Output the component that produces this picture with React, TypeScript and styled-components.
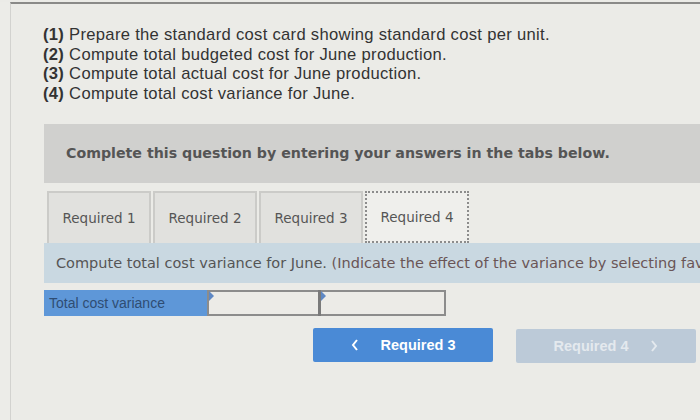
import React from "react";
import styled, { createGlobalStyle } from "styled-components";

const Global = createGlobalStyle`
  html, body { margin: 0; padding: 0; }
  body {
    width: 700px;
    height: 420px;
    overflow: hidden;
    background: #ebebe7;
    font-family: "Liberation Sans", Arial, sans-serif;
  }
`;

const Page = styled.div`
  width: 700px;
  height: 420px;
  padding-left: 10px;
  box-sizing: border-box;
  background: #ecece8;
`;

const Frame = styled.div`
  height: 100%;
  box-sizing: border-box;
  border-top: 2px solid #8a8a88;
  border-left: 1px solid #d2d2cf;
  margin-top: 2px;
  padding: 21px 0 0 32px;
  background: #ebebe7;
`;

const Instructions = styled.div`
  font-family: "Liberation Sans", Arial, sans-serif;
  font-size: 16.6px;
  line-height: 19.5px;
  letter-spacing: 0.3px;
  color: #333;
`;

const Line = styled.div`
  white-space: nowrap;
  b { font-weight: 700; }
`;

const Question = styled.div`
  margin-top: 21px;
  margin-left: 1px;
`;

const Banner = styled.div`
  height: 59px;
  background: #d0d0ce;
  display: flex;
  align-items: center;
  padding-left: 22px;
  font-family: "DejaVu Sans", Verdana, sans-serif;
  font-weight: 700;
  font-size: 14.2px;
  color: #555;
  white-space: nowrap;
  padding-bottom: 2px;
  box-sizing: border-box;
`;

const Tabs = styled.div`
  display: flex;
  gap: 2px;
  margin-top: 8px;
  padding-left: 3px;
`;

const Tab = styled.div<{ $active?: boolean }>`
  width: 104px;
  height: 52px;
  box-sizing: border-box;
  display: flex;
  align-items: center;
  justify-content: center;
  font-family: "DejaVu Sans", Verdana, sans-serif;
  font-size: 13.5px;
  color: #555;
  background: ${(p) => (p.$active ? "#efefec" : "#e1e1de")};
  border: ${(p) => (p.$active ? "2px dotted #8c8c8c" : "2px solid #cbcbc8")};
  border-bottom: ${(p) => (p.$active ? "2px dotted #8c8c8c" : "none")};
`;

const Prompt = styled.div`
  height: 40px;
  background: #c9d8e1;
  display: flex;
  align-items: center;
  padding-left: 12px;
  font-family: "DejaVu Sans", Verdana, sans-serif;
  font-size: 14.5px;
  color: #555;
  white-space: nowrap;
  overflow: hidden;
  span { color: #6a5556; }
`;

const Row = styled.div`
  display: flex;
  margin-top: 7px;
  height: 26px;
`;

const LabelCell = styled.div`
  width: 163px;
  background: #5e97d8;
  display: flex;
  align-items: center;
  padding-left: 5px;
  box-sizing: border-box;
  font-family: "Liberation Sans", Arial, sans-serif;
  font-size: 14px;
  color: #2f4d73;
`;

const InputCell = styled.div<{ $w: number; $joined?: boolean }>`
  position: relative;
  width: ${(p) => p.$w}px;
  box-sizing: border-box;
  border: 2px solid #8c8c8c;
  border-left-width: ${(p) => (p.$joined ? 0 : 2)}px;
  background: #ecebe7;
`;

const Flag = styled.div<{ $x?: number }>`
  position: absolute;
  top: -1px;
  left: ${(p) => p.$x ?? 0}px;
  width: 0;
  height: 0;
  border-top: 5px solid transparent;
  border-bottom: 5px solid transparent;
  border-left: 5px solid #5e88c4;
`;

const Divider = styled.div`
  position: absolute;
  top: -2px;
  left: -2px;
  bottom: -2px;
  width: 3px;
  background: #7a7a7a;
`;

const Nav = styled.div`
  display: flex;
  margin-top: 12px;
  padding-left: 269px;
  gap: 23px;
`;

const NavButton = styled.div<{ $disabled?: boolean }>`
  width: 180px;
  height: 34px;
  box-sizing: border-box;
  border-radius: 2px;
  display: flex;
  align-items: center;
  justify-content: center;
  gap: 22px;
  font-family: "Liberation Sans", Arial, sans-serif;
  font-weight: 700;
  font-size: 14.5px;
  color: ${(p) => (p.$disabled ? "#e4e9ee" : "#ffffff")};
  background: ${(p) => (p.$disabled ? "#bccad8" : "#4a8ad6")};
  margin-top: ${(p) => (p.$disabled ? 1 : 0)}px;
  svg { display: block; }
`;

const Chevron = ({ dir }: { dir: "left" | "right" }) => (
  <svg width="8" height="12" viewBox="0 0 8 12">
    <path
      d={dir === "left" ? "M6 1 L2 6 L6 11" : "M2 1 L6 6 L2 11"}
      fill="none"
      stroke="currentColor"
      strokeWidth="2"
    />
  </svg>
);

export default function App() {
  return (
    <>
      <Global />
      <Page>
        <Frame>
          <Instructions>
            <Line><b>(1)</b> Prepare the standard cost card showing standard cost per unit.</Line>
            <Line><b>(2)</b> Compute total budgeted cost for June production.</Line>
            <Line><b>(3)</b> Compute total actual cost for June production.</Line>
            <Line><b>(4)</b> Compute total cost variance for June.</Line>
          </Instructions>
          <Question>
            <Banner>Complete this question by entering your answers in the tabs below.</Banner>
            <Tabs>
              <Tab>Required 1</Tab>
              <Tab>Required 2</Tab>
              <Tab>Required 3</Tab>
              <Tab $active>Required 4</Tab>
            </Tabs>
            <Prompt>
              Compute total cost variance for June.&nbsp;<span>(Indicate the effect of the variance by selecting favorable or unfavorable.)</span>
            </Prompt>
            <Row>
              <LabelCell>Total cost variance</LabelCell>
              <InputCell $w={113}><Flag /></InputCell>
              <InputCell $w={126} $joined><Divider /><Flag $x={1} /></InputCell>
            </Row>
            <Nav>
              <NavButton>
                <Chevron dir="left" />
                <span>Required 3</span>
              </NavButton>
              <NavButton $disabled>
                <span>Required 4</span>
                <Chevron dir="right" />
              </NavButton>
            </Nav>
          </Question>
        </Frame>
      </Page>
    </>
  );
}
